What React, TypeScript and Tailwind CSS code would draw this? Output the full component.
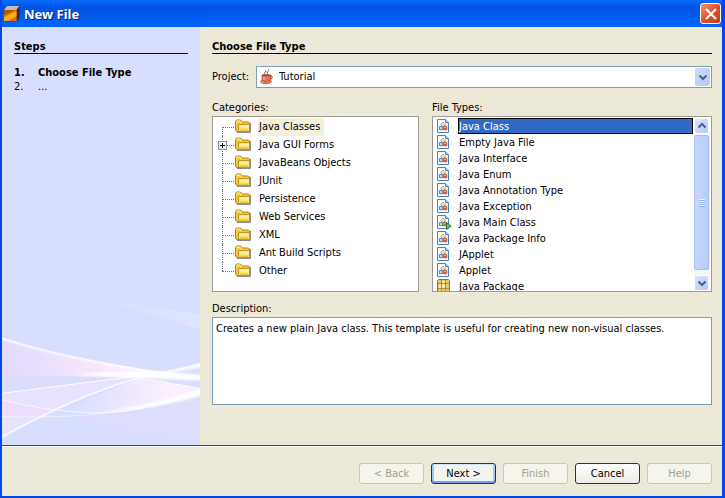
import React, { useState } from 'react';

const categories = [
  'Java Classes',
  'Java GUI Forms',
  'JavaBeans Objects',
  'JUnit',
  'Persistence',
  'Web Services',
  'XML',
  'Ant Build Scripts',
  'Other',
];

const fileTypes = [
  'Java Class',
  'Empty Java File',
  'Java Interface',
  'Java Enum',
  'Java Annotation Type',
  'Java Exception',
  'Java Main Class',
  'Java Package Info',
  'JApplet',
  'Applet',
  'Java Package',
];

const CubeIcon = () => (
  <svg className="w-4 h-4" viewBox="0 0 16 16" aria-hidden="true">
    <path d="M0 4 3 0h12.500L12.500 4z" fill="#c4bab4" />
    <path d="M12.500 4l3-4v12l-3 4z" fill="#4a2208" />
    <path d="M0 4h12.500v12H0z" fill="#d9720a" />
    <path d="M0 11 12.500 5v5L2 16H0z" fill="#fbab1e" />
    <path d="M0 4h10L0 9z" fill="#a9540c" />
    <path d="M0 15h12.500v1H0z" fill="#8a3d04" />
  </svg>
);

const CupIcon = () => (
  <svg className="w-4 h-4" viewBox="0 0 16 16" aria-hidden="true">
    <path d="M4.500 5V3.500l1-1V1M7.500 5V3l1-1V0M6 4V2" fill="none" stroke="#8a8a8a" />
    <ellipse cx="6" cy="12.500" rx="5.500" ry="2.200" fill="#eb9a80" stroke="#b0492c" strokeWidth=".8" />
    <path d="M2 6h8.500v3.500c0 2-1.700 3.500-4.200 3.500S2 11.500 2 9.500z" fill="#e2775a" stroke="#a63e24" strokeWidth=".8" />
    <path d="M10.500 7h1.500v2.500l-2 1" fill="none" stroke="#b0492c" />
    <ellipse cx="6.200" cy="6.300" rx="3.800" ry="1" fill="#a8452a" />
    <path d="M4 8v3" stroke="#f9cdb9" />
  </svg>
);

const FolderIcon = () => (
  <svg className="w-4 h-4 shrink-0" viewBox="0 0 16 16" aria-hidden="true">
    <path d="M2 14.500h13.500V5" fill="none" stroke="#8d8d8d" />
    <path d="M.5 12.500v-9l1-1.500h4l1.500 2h6.500l1 1v8.500H2z" fill="#f3c93c" stroke="#b8860b" />
    <path d="M1.500 4l.5-1h3l1.500 2" fill="none" stroke="#fff3b0" />
    <path d="M3.500 6.500h11v7h-11z" fill="#fbe37a" stroke="#c89614" />
    <path d="M4.500 7.500h9v2h-9z" fill="#fff4b4" />
    <path d="M4.500 11.500h9v1.500h-9z" fill="#f2c22e" />
  </svg>
);

const JavaFileIcon = ({ runnable }: { runnable?: boolean }) => (
  <svg className="w-4 h-4 shrink-0" viewBox="0 0 16 16" aria-hidden="true">
    <path d="M.5 1.500h8l3 3v10H.5z" fill="#f4f9ff" stroke="#4a7fc1" />
    <path d="M8.500 1.500v3h3" fill="#cfe0f5" stroke="#4a7fc1" />
    <path d="M6 4 8.500 6.500 6 9 3.500 6.500z" fill="#f3d9a0" stroke="#c09a5c" strokeWidth=".7" />
    <path d="M2 8h4v4H2z" fill="#4f8fd8" />
    <path d="M3 9h2v2H3z" fill="#b9d8f8" />
    <circle cx="8" cy="10" r="2.500" fill="#d9643c" />
    <path d="M7 9h1.500v1H7z" fill="#f5b59c" />
    {runnable && <path d="M9.500 8.500l4.500 3.500-4.500 3.500z" fill="#5cc46a" stroke="#1f7a2e" />}
  </svg>
);

const PackageIcon = () => (
  <svg className="w-4 h-4 shrink-0" viewBox="0 0 16 16" aria-hidden="true">
    <path d="M.5 2.500l1-1h10l1 1v12H.5z" fill="#edc968" stroke="#94742c" />
    <path d="M1 5.500h11M1 10.500h11M4.500 2v12M8.500 2v12" stroke="#b08a35" fill="none" />
    <path d="M5 3h3v2H5zM2 6h2v4H2zM5 6h3v4H5z" fill="#f9e7a4" />
  </svg>
);

const Chevron = ({ up }: { up?: boolean }) => (
  <svg className="w-2 h-2" viewBox="0 0 8 8" aria-hidden="true">
    <path d={up ? 'M.5 5.500 4 2l3.500 3.500' : 'M.5 2.500 4 6l3.500-3.500'} fill="none" stroke="#4d6185" strokeWidth="2" />
  </svg>
);

// Light ribbons at the foot of the steps panel
const Waves = () => (
  <svg className="absolute bottom-0 left-0 w-full h-[155px]" viewBox="6 0 594 465" preserveAspectRatio="none" aria-hidden="true">
    <defs>
      <linearGradient id="ribbon" x1="0" y1="0" x2="1" y2="0">
        <stop offset="0" stopColor="#e6dafc" stopOpacity=".7" />
        <stop offset=".45" stopColor="#f6e6fc" />
        <stop offset="1" stopColor="#ffffff" />
      </linearGradient>
      <linearGradient id="lens" x1="0" y1="0" x2="1" y2="0">
        <stop offset="0" stopColor="#dfe0fe" stopOpacity=".3" />
        <stop offset=".5" stopColor="#efe8fe" />
        <stop offset=".8" stopColor="#fcf1fe" />
        <stop offset="1" stopColor="#f6efff" />
      </linearGradient>
      <linearGradient id="sheen" x1="0" y1="0" x2="1" y2="0">
        <stop offset=".3" stopColor="#fff" stopOpacity="0" />
        <stop offset="1" stopColor="#fff" stopOpacity=".2" />
      </linearGradient>
      <filter id="soft" x="-5%" y="-50%" width="110%" height="200%">
        <feGaussianBlur stdDeviation="3" />
      </filter>
    </defs>
    <path d="M150 15Q400 35 600 75V120Q400 45 150 15z" fill="url(#sheen)" />
    <path d="M6 145C160 195 380 236 600 263L380 262L6 255z" fill="url(#ribbon)" />
    <path d="M6 255L380 262L6 310z" fill="#dfdcfe" opacity=".6" />
    <path d="M6 310L380 262L430 262Q250 310 6 442z" fill="#ebe4ff" opacity=".8" />
    <path d="M6 330Q120 355 180 362L130 380H6z" fill="#ecdafc" opacity=".7" />
    <path d="M430 262L600 294V308Q450 365 300 370H190Q300 305 430 262z" fill="url(#lens)" />
    <path d="M200 380Q450 375 600 312V465Q350 430 200 380z" fill="#e2dcfe" opacity=".5" />
    <g fill="#fff" filter="url(#soft)">
      <path d="M230 255Q420 230 620 258V272Q420 264 230 255z" />
      <path d="M440 254Q540 240 620 215V228Q540 246 440 254z" />
      <path d="M300 368Q500 335 620 290V312Q500 350 300 368z" />
    </g>
    <g fill="none" stroke="#fff">
      <path d="M6 147C160 197 380 238 600 265" strokeWidth="7" opacity=".5" filter="url(#soft)" />
      <path d="M6 145C160 195 380 236 600 263" strokeWidth="3" />
      <path d="M6 310L380 262Q500 250 600 222" strokeWidth="3" opacity=".9" />
      <path d="M6 442Q220 320 420 262" strokeWidth="5" opacity=".7" />
      <path d="M400 266Q480 274 600 296" strokeWidth="3" opacity=".6" />
      <path d="M6 330Q140 365 300 370Q440 364 600 304" strokeWidth="3" opacity=".7" />
      <path d="M6 380Q200 384 300 370" strokeWidth="3" opacity=".5" />
    </g>
  </svg>
);

const wizardButtons = [
  { label: '< Back', disabled: true },
  { label: 'Next >', primary: true },
  { label: 'Finish', disabled: true },
  { label: 'Cancel' },
  { label: 'Help', disabled: true },
];

const buttonStyle = (b: { disabled?: boolean; primary?: boolean }) => {
  if (b.disabled) return 'border-[#c9c7ba] bg-[#f5f4ea] text-[#a1a192]';
  if (b.primary) return 'border-[#003c74] bg-[#f4f4ef] text-black shadow-[inset_0_1px_0_#cee7ff,inset_0_-2px_0_#7f9cee,inset_2px_0_0_#a8c4f4,inset_-2px_0_0_#a8c4f4]';
  return 'border-[#003c74] bg-linear-to-b from-white to-[#ecebe5] text-black';
};

const scrollButton = 'flex items-center justify-center w-[15px] h-4 rounded-xs border border-white bg-linear-to-br from-[#dbe5fe] to-[#b3c8f8]';

const App: React.FC = () => {
  const [category, setCategory] = useState('Java Classes');
  const [fileType, setFileType] = useState('Java Class');

  return (
    <div className="min-h-screen flex flex-col bg-[#ece9d8] border-l-2 border-r-3 border-b-2 border-[#0048e8] font-['DejaVu_Sans_Condensed','DejaVu_Sans',sans-serif] text-[11px] leading-4 text-black">
      <header className="flex items-center h-[27px] pl-0.5 pr-px bg-linear-to-b from-[#0a6cff] via-[#0053e1] via-30% to-[#0066ff]">
        <CubeIcon />
        <h1 className="ml-1 flex-1 font-['Noto_Sans',sans-serif] text-[13px] font-bold text-white [text-shadow:1px_1px_0_#0a1883]">New File</h1>
        <button aria-label="Close" className="flex items-center justify-center w-[21px] h-[21px] rounded-[3px] border border-white bg-linear-to-br from-[#f0937a] via-[#e0502c] to-[#c23a14]">
          <svg className="w-3 h-3" viewBox="0 0 12 12" aria-hidden="true">
            <path d="M1 1l10 10M11 1L1 11" stroke="#fff" strokeWidth="2.200" />
          </svg>
        </button>
      </header>

      <div className="flex flex-1">
        <aside className="relative w-[198px] shrink-0 bg-[#d8dffe] pt-3 px-3">
          <Waves />
          <h2 className="h-[15px] border-b border-black font-bold">Steps</h2>
          <ol className="relative mt-3 leading-[14px]">
            <li className="flex font-bold"><span className="w-6">1.</span>Choose File Type</li>
            <li className="flex"><span className="w-6">2.</span>...</li>
          </ol>
        </aside>

        <main className="flex-1 min-w-0 pt-3 pl-3 pr-2.5">
          <h2 className="h-[15px] border-b border-black font-bold">Choose File Type</h2>

          <div className="flex items-center mt-3">
            <label htmlFor="project" className="w-11">Project:</label>
            <div className="relative flex-1">
              <select id="project" className="block w-full h-[22px] pl-[22px] appearance-none border border-[#7f9db9] bg-white">
                <option>Tutorial</option>
              </select>
              <span className="absolute left-1 top-[3px] pointer-events-none"><CupIcon /></span>
              <span className="absolute right-0.5 top-0.5 flex items-center justify-center w-[15px] h-[18px] rounded-xs bg-linear-to-br from-[#cfdcfd] to-[#b4c9f8] pointer-events-none">
                <Chevron />
              </span>
            </div>
          </div>

          <div className="grid grid-cols-[207fr_280fr] gap-x-[13px] mt-3">
            <section>
              <h3 id="categories" className="h-4">Categories:</h3>
              <ul role="tree" aria-labelledby="categories" className="h-44 pt-px pl-[9px] border border-[#9d9c94] bg-white">
                {categories.map((name, i) => (
                  <li key={name} role="treeitem" aria-selected={name === category} className="flex h-[18px]">
                    <span className="relative w-[13px] shrink-0">
                      <span className={`absolute left-0 w-px border-l border-dotted border-gray-500 ${i === 0 ? 'top-[9px] h-[9px]' : i === categories.length - 1 ? 'top-0 h-[9px]' : 'top-0 h-[18px]'}`} />
                      <span className="absolute left-0 top-[9px] w-3 border-t border-dotted border-gray-500" />
                      {name === 'Java GUI Forms' && (
                        <button aria-label="Expand" className="absolute -left-1 top-[5px] flex items-center justify-center w-[9px] h-[9px] border border-[#7b98b6] bg-[#f4f3ee]">
                          <svg className="w-[5px] h-[5px]" viewBox="0 0 5 5" aria-hidden="true"><path d="M2 0h1v5H2zM0 2h5v1H0z" /></svg>
                        </button>
                      )}
                    </span>
                    <FolderIcon />
                    <button
                      onClick={() => setCategory(name)}
                      className={`ml-[7px] pl-px pr-1 ${name === category ? 'bg-[#f5f0dc]' : ''}`}
                    >
                      {name}
                    </button>
                  </li>
                ))}
              </ul>
            </section>

            <section>
              <h3 id="file-types" className="h-4">File Types:</h3>
              <div className="flex h-44 pr-px pt-px border border-[#9d9c94] bg-white">
                <ul role="listbox" aria-labelledby="file-types" className="flex-1 h-[173px] pl-1 overflow-hidden">
                  {fileTypes.map(name => (
                    <li
                      key={name}
                      role="option"
                      aria-selected={name === fileType}
                      onClick={() => setFileType(name)}
                      className="flex h-4"
                    >
                      {name === 'Java Package' ? <PackageIcon /> : <JavaFileIcon runnable={name === 'Java Main Class'} />}
                      <span className={`ml-[5px] flex-1 border ${name === fileType ? 'border-black bg-[#316ac5] text-white' : 'border-transparent'}`}>
                        {name}
                      </span>
                    </li>
                  ))}
                </ul>
                <div className="flex flex-col ml-px w-4 bg-[#f6f5f0]">
                  <button aria-label="Scroll up" className={scrollButton}><Chevron up /></button>
                  <div className="flex flex-col items-center justify-center gap-px w-[15px] h-[135px] my-px rounded-xs border border-[#a5bdf0] bg-linear-to-r from-[#c9d7fd] to-[#b8cdfb]">
                    {[0, 1, 2, 3].map(n => <span key={n} className="w-1.5 h-px bg-[#eef4fe] shadow-[0_1px_0_#8cb0f8]" />)}
                  </div>
                  <button aria-label="Scroll down" className={`mt-auto ${scrollButton}`}><Chevron /></button>
                </div>
              </div>
            </section>
          </div>

          <label htmlFor="description" className="block mt-[9px] h-4">Description:</label>
          <textarea
            id="description"
            readOnly
            className="block w-full h-[88px] p-[3px] resize-none border border-[#7f9db9] bg-white"
            value="Creates a new plain Java class. This template is useful for creating new non-visual classes."
          />
        </main>
      </div>

      <footer className="flex justify-end gap-[7px] h-[51px] pt-[17px] pr-2.5 border-t border-[#4a4550] shadow-[inset_0_1px_0_#fff]">
        {wizardButtons.map(b => (
          <button key={b.label} disabled={b.disabled} className={`w-[65px] h-[21px] rounded-[3px] border ${buttonStyle(b)}`}>
            {b.label}
          </button>
        ))}
      </footer>
    </div>
  );
};

export default App;
